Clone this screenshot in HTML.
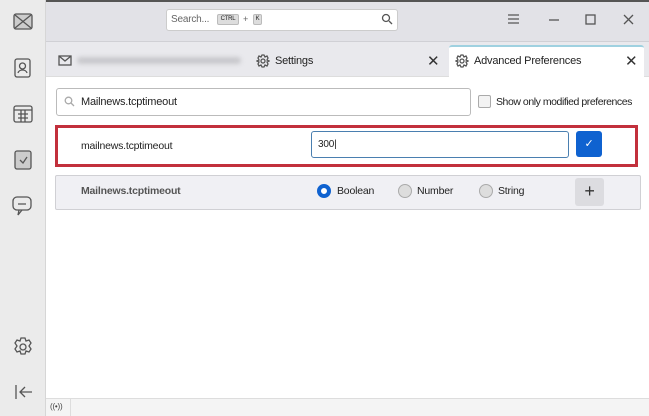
<!DOCTYPE html>
<html><head><style>
*{margin:0;padding:0;box-sizing:border-box}
body{width:649px;height:416px;overflow:hidden;position:relative;background:#fff;font-family:"Liberation Sans",sans-serif;font-size:11px;color:#222;letter-spacing:-0.2px}
.a{position:absolute;white-space:nowrap}
svg{position:absolute;fill:none;stroke:#555;stroke-width:1.3}
</style></head><body>
<div class="a" style="left:0;top:0;width:46px;height:416px;background:#ebebeb;border-right:1px solid #d6d6d6"></div>
<div class="a" style="left:46px;top:0;width:603px;height:41px;background:#e2e2e7;border-top:2px solid #555"></div>
<div class="a" style="left:46px;top:41px;width:603px;height:36px;background:#e9e9ed;border-top:1px solid #d0d0d5;border-bottom:1px solid #ddd"></div>
<svg style="left:13px;top:13px" width="20" height="18"><rect x="1" y="1" width="18" height="15" rx="2" fill="#ccc"/><path d="M2 2l16 13M18 2L2 15"/></svg>
<svg style="left:14px;top:58px" width="17" height="20"><rect x="1" y="1" width="15" height="18" rx="2"/><circle cx="8.5" cy="8" r="3"/><path d="M4 15c1-4 8-4 9 0"/></svg>
<svg style="left:13px;top:104px" width="20" height="20"><rect x="1" y="2" width="18" height="16" rx="2"/><path d="M1 6h18M5 10h10M5 14h10M8 6v12M12 6v12"/></svg>
<svg style="left:14px;top:148px" width="18" height="22"><rect x="1" y="3" width="16" height="18" rx="2" fill="#ccc"/><path d="M6 12l3 3 4-6"/></svg>
<svg style="left:12px;top:195px" width="22" height="22"><rect x="1" y="2" width="18" height="13" rx="4"/><path d="M7 15l-1 5 4-5M6 9h8"/></svg>
<svg style="left:12px;top:336px" width="22" height="22"><circle cx="11" cy="11" r="3"/><path d="M9 2h4l1 3 3-1 2 3-2 3 2 3-2 3-3-1-1 3h-4l-1-3-3 1-2-3 2-3-2-3 2-3 3 1z"/></svg>
<svg style="left:14px;top:384px" width="20" height="16"><path d="M2 1v14M18 8H6M11 3L6 8l5 5"/></svg>
<div class="a" style="left:166px;top:9px;width:232px;height:22px;background:#fff;border:1px solid #ccc;border-radius:3px"></div>
<div class="a" style="left:171px;top:14px;color:#666;font-size:10px">Search...</div>
<div class="a" style="left:217px;top:14px;width:22px;height:11px;background:#ddd;border:1px solid #bbb;border-radius:2px;font-size:6px;text-align:center;line-height:9px">CTRL</div>
<div class="a" style="left:243px;top:14px;font-size:9px;color:#666">+</div>
<div class="a" style="left:253px;top:14px;width:9px;height:11px;background:#ddd;border:1px solid #bbb;border-radius:2px;font-size:6px;text-align:center;line-height:9px">K</div>
<svg style="left:381px;top:13px" width="12" height="12"><circle cx="5" cy="5" r="3.5"/><path d="M8 8l3 3"/></svg>
<svg style="left:507px;top:14px" width="13" height="10"><path d="M1 1h11M1 5h11M1 9h11"/></svg>
<svg style="left:548px;top:14px" width="12" height="10"><path d="M1 6h10"/></svg>
<svg style="left:585px;top:14px" width="11" height="11"><rect x="1" y="1" width="9" height="9"/></svg>
<svg style="left:623px;top:14px" width="11" height="11"><path d="M1 1l9 9M10 1l-9 9"/></svg>
<svg style="left:58px;top:55px" width="14" height="12"><rect x="1" y="1" width="12" height="9"/><path d="M1 1l6 5 6-5"/></svg>
<div class="a" style="left:77px;top:57px;width:164px;height:7px;background:#c8c8cc;border-radius:4px;filter:blur(2px)"></div>
<svg style="left:256px;top:54px" width="14" height="14"><circle cx="7" cy="7" r="2"/><path d="M6 1h2l1 2 2-1 1 2-1 2 2 1v0l-2 1 1 2-1 2-2-1-1 2H6l-1-2-2 1-1-2 1-2-2-1 2-1-1-2 1-2 2 1z"/></svg>
<div class="a" style="left:275px;top:55px;font-size:11px">Settings</div>
<div class="a" style="left:427px;top:52px;font-size:15px;color:#333">✕</div>
<div class="a" style="left:449px;top:45px;width:195px;height:33px;background:#fff;border-top:2px solid #9fd1e0;border-radius:3px 3px 0 0"></div>
<svg style="left:455px;top:54px" width="14" height="14"><circle cx="7" cy="7" r="2"/><path d="M6 1h2l1 2 2-1 1 2-1 2 2 1v0l-2 1 1 2-1 2-2-1-1 2H6l-1-2-2 1-1-2 1-2-2-1 2-1-1-2 1-2 2 1z"/></svg>
<div class="a" style="left:474px;top:55px;font-size:11px">Advanced Preferences</div>
<div class="a" style="left:625px;top:52px;font-size:15px;color:#333">✕</div>
<div class="a" style="left:56px;top:88px;width:415px;height:28px;border:1px solid #bbb;border-radius:3px"></div>
<svg style="left:64px;top:96px;stroke:#aaa" width="11" height="11"><circle cx="4.5" cy="4.5" r="3.3"/><path d="M7 7l3 3"/></svg>
<div class="a" style="left:81px;top:96px;font-size:11px">Mailnews.tcptimeout</div>
<div class="a" style="left:478px;top:95px;width:13px;height:13px;border:1px solid #aaa;background:#f3f3f3;border-radius:2px"></div>
<div class="a" style="left:496px;top:96px;font-size:10.5px;letter-spacing:-0.45px">Show only modified preferences</div>
<div class="a" style="left:55px;top:125px;width:583px;height:42px;border:3px solid #c2303c"></div>
<div class="a" style="left:81px;top:140px;font-size:10.5px">mailnews.tcptimeout</div>
<div class="a" style="left:311px;top:131px;width:258px;height:27px;border:1.5px solid #4a7fb0;border-radius:3px"></div>
<div class="a" style="left:318px;top:139px;font-size:10px">300|</div>
<div class="a" style="left:576px;top:131px;width:26px;height:26px;background:#0f62d0;border-radius:3px;color:#fff;text-align:center;line-height:26px;font-size:11px">✓</div>
<div class="a" style="left:55px;top:175px;width:586px;height:35px;background:#f0f0f4;border:1px solid #d0d0d4;border-radius:2px"></div>
<div class="a" style="left:81px;top:185px;font-size:10.5px;font-weight:bold;color:#555">Mailnews.tcptimeout</div>
<div class="a" style="left:317px;top:184px;width:14px;height:14px;border:4px solid #0f62d0;border-radius:50%;background:#fff"></div>
<div class="a" style="left:337px;top:185px;font-size:10.5px">Boolean</div>
<div class="a" style="left:398px;top:184px;width:14px;height:14px;border:1px solid #aaa;border-radius:50%;background:#ddd"></div>
<div class="a" style="left:417px;top:185px;font-size:10.5px">Number</div>
<div class="a" style="left:479px;top:184px;width:14px;height:14px;border:1px solid #aaa;border-radius:50%;background:#ddd"></div>
<div class="a" style="left:498px;top:185px;font-size:10.5px">String</div>
<div class="a" style="left:575px;top:178px;width:29px;height:28px;background:#dcdce0;border-radius:3px;text-align:center;line-height:27px;font-size:18px;color:#333">+</div>
<div class="a" style="left:46px;top:398px;width:603px;height:18px;background:#f4f4f4;border-top:1px solid #ddd"></div>
<div class="a" style="left:70px;top:399px;width:1px;height:17px;background:#ddd"></div>
<div class="a" style="left:50px;top:402px;font-size:8px;color:#444">((•))</div>
</body></html>
